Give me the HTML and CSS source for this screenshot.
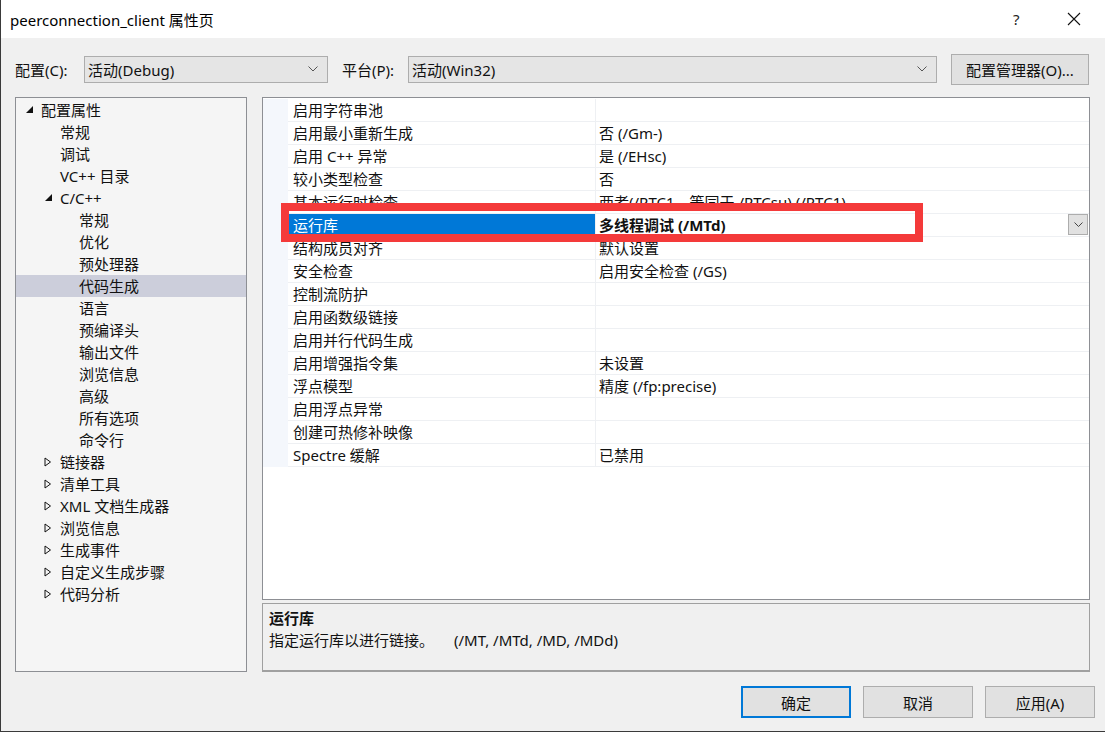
FILE: index.html
```html
<!DOCTYPE html>
<html lang="zh-CN">
<head>
  <meta charset="UTF-8" />
  <title>peerconnection_client 属性页</title>
  <link rel="stylesheet" href="styles.css">
</head>
<body>
  <div class="window">
    <div class="titlebar">
      <span class="title">peerconnection_client 属性页</span>
      <span class="help">?</span>
      <span class="close">
        <svg width="14" height="14" viewBox="0 0 14 14"><path d="M1 1 L13 13 M13 1 L1 13" stroke="#111" stroke-width="1.1" fill="none"/></svg>
      </span>
    </div>

    <div class="config-bar">
      <span class="label">配置(C):</span>
      <div class="combo combo-config">
        <span>活动(Debug)</span>
        <svg class="chev" width="10" height="6" viewBox="0 0 10 6"><path d="M0.5 0.5 L5 5 L9.5 0.5" stroke="#555" fill="none"/></svg>
      </div>
      <span class="label label-platform">平台(P):</span>
      <div class="combo combo-platform">
        <span>活动(Win32)</span>
        <svg class="chev" width="10" height="6" viewBox="0 0 10 6"><path d="M0.5 0.5 L5 5 L9.5 0.5" stroke="#555" fill="none"/></svg>
      </div>
      <button class="btn btn-manager">配置管理器(O)...</button>
    </div>

    <div class="main">
      <div class="tree">
        <div class="node l1"><span class="tw"><svg width="9" height="9" viewBox="0 0 9 9"><path d="M8 1 L8 8 L1 8 Z" fill="#111"/></svg></span>配置属性</div>
        <div class="node l2">常规</div>
        <div class="node l2">调试</div>
        <div class="node l2">VC++ 目录</div>
        <div class="node l2a"><span class="tw"><svg width="9" height="9" viewBox="0 0 9 9"><path d="M8 1 L8 8 L1 8 Z" fill="#111"/></svg></span>C/C++</div>
        <div class="node l3">常规</div>
        <div class="node l3">优化</div>
        <div class="node l3">预处理器</div>
        <div class="node l3 selected">代码生成</div>
        <div class="node l3">语言</div>
        <div class="node l3">预编译头</div>
        <div class="node l3">输出文件</div>
        <div class="node l3">浏览信息</div>
        <div class="node l3">高级</div>
        <div class="node l3">所有选项</div>
        <div class="node l3">命令行</div>
        <div class="node l2a"><span class="tw"><svg class="closed" width="8" height="10" viewBox="0 0 8 10"><path d="M1 1 L6.5 5 L1 9 Z" stroke="#111" fill="none"/></svg></span>链接器</div>
        <div class="node l2a"><span class="tw"><svg class="closed" width="8" height="10" viewBox="0 0 8 10"><path d="M1 1 L6.5 5 L1 9 Z" stroke="#111" fill="none"/></svg></span>清单工具</div>
        <div class="node l2a"><span class="tw"><svg class="closed" width="8" height="10" viewBox="0 0 8 10"><path d="M1 1 L6.5 5 L1 9 Z" stroke="#111" fill="none"/></svg></span>XML 文档生成器</div>
        <div class="node l2a"><span class="tw"><svg class="closed" width="8" height="10" viewBox="0 0 8 10"><path d="M1 1 L6.5 5 L1 9 Z" stroke="#111" fill="none"/></svg></span>浏览信息</div>
        <div class="node l2a"><span class="tw"><svg class="closed" width="8" height="10" viewBox="0 0 8 10"><path d="M1 1 L6.5 5 L1 9 Z" stroke="#111" fill="none"/></svg></span>生成事件</div>
        <div class="node l2a"><span class="tw"><svg class="closed" width="8" height="10" viewBox="0 0 8 10"><path d="M1 1 L6.5 5 L1 9 Z" stroke="#111" fill="none"/></svg></span>自定义生成步骤</div>
        <div class="node l2a"><span class="tw"><svg class="closed" width="8" height="10" viewBox="0 0 8 10"><path d="M1 1 L6.5 5 L1 9 Z" stroke="#111" fill="none"/></svg></span>代码分析</div>
      </div>

      <div class="right">
        <div class="grid">
          <div class="prop"><span class="gutter"></span><span class="name">启用字符串池</span><span class="value"></span></div>
          <div class="prop"><span class="gutter"></span><span class="name">启用最小重新生成</span><span class="value">否 (/Gm-)</span></div>
          <div class="prop"><span class="gutter"></span><span class="name">启用 C++ 异常</span><span class="value">是 (/EHsc)</span></div>
          <div class="prop"><span class="gutter"></span><span class="name">较小类型检查</span><span class="value">否</span></div>
          <div class="prop"><span class="gutter"></span><span class="name">基本运行时检查</span><span class="value">两者(/RTC1，等同于 /RTCsu) (/RTC1)</span></div>
          <div class="prop selected">
            <span class="gutter"></span><span class="name">运行库</span>
            <span class="value">多线程调试 (/MTd)
              <span class="drop"><svg width="9" height="5" viewBox="0 0 9 5"><path d="M0.5 0.5 L4.5 4.5 L8.5 0.5" stroke="#444" fill="none"/></svg></span>
            </span>
          </div>
          <div class="prop"><span class="gutter"></span><span class="name">结构成员对齐</span><span class="value">默认设置</span></div>
          <div class="prop"><span class="gutter"></span><span class="name">安全检查</span><span class="value">启用安全检查 (/GS)</span></div>
          <div class="prop"><span class="gutter"></span><span class="name">控制流防护</span><span class="value"></span></div>
          <div class="prop"><span class="gutter"></span><span class="name">启用函数级链接</span><span class="value"></span></div>
          <div class="prop"><span class="gutter"></span><span class="name">启用并行代码生成</span><span class="value"></span></div>
          <div class="prop"><span class="gutter"></span><span class="name">启用增强指令集</span><span class="value">未设置</span></div>
          <div class="prop"><span class="gutter"></span><span class="name">浮点模型</span><span class="value">精度 (/fp:precise)</span></div>
          <div class="prop"><span class="gutter"></span><span class="name">启用浮点异常</span><span class="value"></span></div>
          <div class="prop"><span class="gutter"></span><span class="name">创建可热修补映像</span><span class="value"></span></div>
          <div class="prop"><span class="gutter"></span><span class="name">Spectre 缓解</span><span class="value">已禁用</span></div>

          <div class="highlight"></div>
        </div>

        <div class="desc">
          <div class="desc-title">运行库</div>
          <div class="desc-text">指定运行库以进行链接。<span class="desc-switch">(/MT, /MTd, /MD, /MDd)</span></div>
        </div>
      </div>
    </div>

    <div class="footer">
      <button class="btn btn-ok">确定</button>
      <button class="btn">取消</button>
      <button class="btn">应用(A)</button>
    </div>
  </div>
</body>
</html>
```

FILE: styles.css
```css
html, body {
  margin: 0;
  padding: 0;
  width: 1105px;
  height: 732px;
  overflow: hidden;
  font-family: "Noto Sans", "Noto Sans CJK SC", sans-serif;
  font-size: 15px;
  color: #111;
  background: #f0f0f0;
}

.window {
  width: 1104px;
  height: 731px;
  border-left: 1px solid #3a3a3a;
  border-bottom: 1px solid #3a3a3a;
  background: #f0f0f0;
  display: flex;
  flex-direction: column;
}

.titlebar {
  height: 38px;
  background: #fff;
  display: flex;
  align-items: center;
  padding-left: 9px;
}

.title {
  flex: 1;
  color: #000;
}

.help {
  width: 20px;
  margin-right: 34px;
  font-size: 15px;
  color: #222;
}

.close {
  display: flex;
  width: 30px;
  margin-right: 8px;
}

.config-bar {
  display: flex;
  align-items: center;
  height: 32px;
  margin-top: 15px;
  padding-left: 14px;
}

.label {
  width: 69px;
}

.label-platform {
  margin-left: 14px;
  width: 66px;
}

.combo {
  border: 1px solid #adadad;
  background: #e5e5e5;
  display: flex;
  align-items: center;
  justify-content: space-between;
  padding: 0 9px 0 3px;
  box-sizing: border-box;
  height: 27px;
}

.combo-config {
  width: 244px;
}

.combo-platform {
  width: 529px;
}

.btn {
  font-family: inherit;
  font-size: 15px;
  color: #111;
  background: #e1e1e1;
  border: 1px solid #adadad;
  padding: 0;
  box-sizing: border-box;
}

.btn-manager {
  width: 138px;
  height: 31px;
  margin-left: 14px;
}

.main {
  display: flex;
  gap: 15px;
  margin-top: 12px;
  padding-left: 14px;
  height: 575px;
}

.tree {
  width: 232px;
  box-sizing: border-box;
  border: 1px solid #8d8f94;
  background: #f5f5f5;
  padding: 1px 0;
}

.node {
  height: 22px;
  line-height: 22px;
  display: flex;
  align-items: center;
  white-space: nowrap;
}

.node.selected {
  background: #cccedb;
}

.tw {
  width: 16px;
  display: flex;
  align-items: center;
}

.tw svg {
  margin-top: -1px;
}

.l1 {
  padding-left: 9px;
}

.l2 {
  padding-left: 44px;
}

.l2a {
  padding-left: 28px;
}

.l3 {
  padding-left: 63px;
}

.right {
  width: 828px;
  display: flex;
  flex-direction: column;
  gap: 3px;
}

.grid {
  position: relative;
  height: 503px;
  box-sizing: border-box;
  border: 1px solid #8d8f94;
  background: #fff;
  padding-top: 1px;
}

.prop {
  display: grid;
  grid-template-columns: 25px 308px 1fr;
  height: 23px;
  line-height: 22px;
  white-space: nowrap;
}

.gutter {
  background: #f4f7fc;
}

.name, .value {
  border-bottom: 1px solid #eef0f3;
  padding-left: 5px;
  overflow: hidden;
}

.name {
  border-right: 1px solid #eef0f3;
}

.value {
  padding-left: 3px;
  display: flex;
  align-items: center;
}

.prop.selected .name {
  background: #0078d7;
  color: #fff;
}

.prop.selected .value {
  font-weight: bold;
  position: relative;
}

.drop {
  position: absolute;
  right: 1px;
  top: 0;
  width: 20px;
  height: 21px;
  box-sizing: border-box;
  border: 1px solid #adadad;
  background: #e1e1e1;
  display: flex;
  align-items: center;
  justify-content: center;
}

.highlight {
  position: absolute;
  left: 18px;
  top: 105px;
  width: 642px;
  height: 39px;
  box-sizing: border-box;
  border: 8px solid #f43a3a;
}

.desc {
  height: 69px;
  box-sizing: border-box;
  border: 1px solid #a0a0a0;
  border-bottom-width: 2px;
  padding: 3px 6px;
  line-height: 22px;
}

.desc-title {
  font-weight: bold;
}

.desc-switch {
  margin-left: 20px;
}

.footer {
  display: flex;
  justify-content: flex-end;
  gap: 12px;
  margin-top: 14px;
  padding-right: 10px;
}

.footer .btn {
  width: 110px;
  height: 32px;
}

.btn-ok {
  border: 2px solid #0078d7 !important;
}
```
